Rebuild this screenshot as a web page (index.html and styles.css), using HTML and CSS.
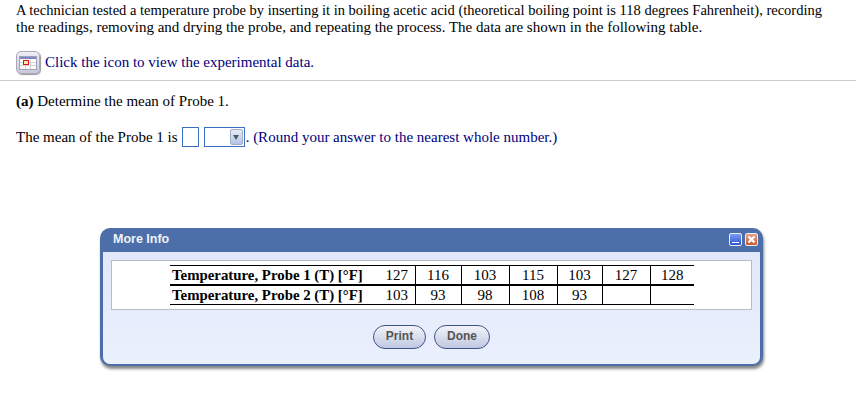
FILE: index.html
```html
<!DOCTYPE html>
<html>
	<head>
		<meta charset="utf-8" />
		<title>More Info</title>
		<link rel="stylesheet" href="styles.css">
	</head>
	<body>
		<div class="intro">
			<p class="question"><span class="line1">A technician tested a temperature probe by inserting it in boiling acetic acid (theoretical boiling point is 118 degrees Fahrenheit), recording</span><br>the readings, removing and drying the probe, and repeating the process. The data are shown in the following table.</p>
			<div class="iconLine">
				<span class="dataIcon">
					<svg width="18" height="14" viewBox="0 0 18 14">
						<rect x="0.5" y="0.5" width="17" height="13" fill="#fdfdf4" stroke="#a0a0b8"/>
						<rect x="1" y="1" width="16" height="2" fill="#7f86c4"/>
						<path d="M6.5 3v10M11.5 3v10M1 6.5h16M1 9.5h16" stroke="#d4d4dc" fill="none"/>
						<rect x="4.5" y="4.5" width="5" height="4" fill="#ffe9a8" stroke="#d8141c"/>
					</svg>
				</span>
				<span>Click the icon to view the experimental data.</span>
			</div>
		</div>
		<div class="part">
			<p class="partTitle"><b>(a)</b> Determine the mean of Probe 1.</p>
			<div class="answerLine">
				<span class="black">The mean of the Probe 1 is</span>
				<span class="inputBox"></span>
				<span class="selectBox"><span class="selectArrow"></span></span>
				<span class="after"><span class="black">.</span> (Round your answer to the nearest whole number.)</span>
			</div>
		</div>

		<div class="infoWin">
			<div class="winTitle">
				<span>More Info</span>
				<div class="winBtns">
					<span class="winBtn winMin"><span class="minBar"></span></span>
					<span class="winBtn winClose">
						<svg width="11" height="11" viewBox="0 0 11 11"><path d="M2.5 2.5l6 6M8.5 2.5l-6 6" stroke="#fff" stroke-width="2.4" fill="none"/></svg>
					</span>
				</div>
			</div>
			<div class="winBody">
				<div class="tableWrap">
					<table class="dataTable">
						<tr>
							<th>Temperature, Probe 1 (T) [°F]</th>
							<td>127</td><td>116</td><td>103</td><td>115</td><td>103</td><td>127</td><td>128</td>
						</tr>
						<tr>
							<th>Temperature, Probe 2 (T) [°F]</th>
							<td>103</td><td>93</td><td>98</td><td>108</td><td>93</td><td></td><td></td>
						</tr>
					</table>
				</div>
				<div class="winBtnRow">
					<span class="pill printBtn">Print</span>
					<span class="pill doneBtn">Done</span>
				</div>
			</div>
		</div>
	</body>
</html>
```

FILE: styles.css
```css
*{
	margin: 0;
	padding: 0;
	box-sizing: border-box;
}
html, body{
	height: 100%;
}
body{
	font-family: "Liberation Serif", serif;
	font-size: 15px;
	line-height: 17px;
	color: #000;
	background-color: #fff;
	position: relative;
}
.intro{
	padding: 2px 16px 0;
	border-bottom: 1px solid #ccc;
	height: 81px;
}
.line1{
	font-size: 14.5px;
}
.iconLine{
	display: flex;
	align-items: center;
	gap: 5px;
	margin-top: 15px;
	color: #000080;
}
.dataIcon{
	width: 24px;
	height: 23px;
	border: 1px solid #a8a8b8;
	border-radius: 5px;
	background: linear-gradient(#eeeef6, #c8c8dc);
	box-shadow: 1px 1px 1px #999;
	display: flex;
	align-items: center;
	justify-content: center;
}
.part{
	padding: 12px 16px 0;
}
.answerLine{
	display: flex;
	align-items: center;
	margin-top: 17px;
}
.black{
	color: #000;
}
.inputBox{
	width: 17px;
	height: 20px;
	border: 1px solid #3a6fc4;
	margin-left: 4px;
}
.selectBox{
	width: 41px;
	height: 20px;
	border: 1px solid #3a6fc4;
	margin-left: 5px;
	display: flex;
	justify-content: flex-end;
	align-items: center;
	padding-right: 1px;
}
.selectArrow{
	width: 13px;
	height: 16px;
	border: 1px solid #a4aec4;
	border-radius: 2px;
	background: linear-gradient(#e4ecfa, #b4c4e4);
	position: relative;
}
.selectArrow:after{
	content: "";
	position: absolute;
	left: 2px;
	top: 5px;
	border-left: 3.5px solid transparent;
	border-right: 3.5px solid transparent;
	border-top: 5px solid #50586c;
}
.after{
	color: #000080;
	margin-left: 1px;
}
.infoWin{
	position: absolute;
	left: 100px;
	top: 228px;
	width: 663px;
	height: 138px;
	background-color: #4c6fa9;
	border-radius: 10px;
	padding: 0 3px 2px 3px;
	box-shadow: 1px 3px 3px #888;
	display: flex;
	flex-direction: column;
}
.winTitle{
	height: 24px;
	padding: 0 2px 2px 10px;
	display: flex;
	justify-content: space-between;
	align-items: center;
	font-family: "Liberation Sans", sans-serif;
	font-size: 12.5px;
	font-weight: bold;
	color: #eef2fa;
}
.winBtns{
	display: flex;
	gap: 3px;
	margin-top: 1px;
}
.winBtn{
	width: 13px;
	height: 13px;
	border: 1px solid #e8eefa;
	border-radius: 2px;
	display: flex;
	align-items: center;
	justify-content: center;
}
.winMin{
	background: linear-gradient(#7a9cf0, #2c54d0);
	align-items: flex-end;
	padding-bottom: 2px;
}
.minBar{
	width: 7px;
	height: 1px;
	background-color: #fff;
}
.winClose{
	background: linear-gradient(#e8a088, #c85a30);
}
.winBody{
	flex: 1;
	background: linear-gradient(#e2e8fb, #ebf0fd);
	padding: 8px 8px 0;
	border-radius: 0 0 7px 7px;
}
.tableWrap{
	height: 50px;
	background-color: #fff;
	border: 1px solid #b8bcc8;
	padding-top: 4px;
	padding-left: 1px;
	display: flex;
	justify-content: center;
}
.dataTable{
	width: 524px;
	height: 40px;
	border-collapse: collapse;
	border-top: 1px solid #000;
	border-bottom: 1px solid #000;
	table-layout: fixed;
	align-self: flex-start;
}
.dataTable tr:first-child{
	border-bottom: 2px solid #000;
}
.dataTable th{
	width: 209px;
	text-align: left;
	padding-left: 2px;
	font-size: 14.85px;
	font-weight: bold;
}
.dataTable td{
	text-align: center;
	border-left: 1px solid #000;
}
.dataTable td:nth-child(2){
	border-left: none;
	width: 36px;
}
.dataTable td:nth-child(3){
	width: 46px;
}
.dataTable td:nth-child(4){
	width: 48px;
}
.dataTable td:nth-child(5){
	width: 48px;
}
.dataTable td:nth-child(6){
	width: 45px;
}
.dataTable td:nth-child(7){
	width: 48px;
}
.dataTable td:nth-child(8){
	width: 44px;
}
.winBtnRow{
	display: flex;
	justify-content: center;
	gap: 8px;
	margin-top: 15px;
}
.pill{
	height: 24px;
	border: 1px solid #3e5488;
	border-radius: 12px;
	background: linear-gradient(#f2f4fa, #c0c8e0);
	font-family: "Liberation Sans", sans-serif;
	font-size: 12px;
	font-weight: bold;
	color: #555;
	line-height: 21px;
	text-align: center;
}
.printBtn{
	width: 53px;
}
.doneBtn{
	width: 56px;
}
```
